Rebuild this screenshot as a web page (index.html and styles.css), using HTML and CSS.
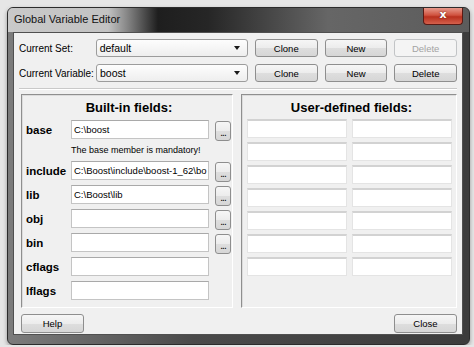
FILE: index.html
```html
<!DOCTYPE html>
<html lang="en">
<head>
    <meta charset="UTF-8"/>
    <title>Global Variable Editor</title>
    <link rel="stylesheet" href="styles.css">
</head>
<body>
<div class="window">
    <div class="titlebar">
        <span class="title">Global Variable Editor</span>
        <span class="close-box">x</span>
    </div>

    <div class="client">
        <!-- set / variable selectors -->
        <div class="select-row">
            <span class="row-label">Current Set:</span>
            <div class="combo"><span>default</span><span class="arrow"></span></div>
            <button class="btn">Clone</button>
            <button class="btn">New</button>
            <button class="btn" disabled>Delete</button>
        </div>
        <div class="select-row">
            <span class="row-label">Current Variable:</span>
            <div class="combo"><span>boost</span><span class="arrow"></span></div>
            <button class="btn">Clone</button>
            <button class="btn">New</button>
            <button class="btn">Delete</button>
        </div>

        <div class="separator"></div>

        <div class="panels">
            <div class="panel builtin">
                <h2 class="panel-title">Built-in fields:</h2>
                <div class="field-row">
                    <span class="field-name">base</span>
                    <div class="input">C:\boost</div>
                    <button class="dots">...</button>
                </div>
                <div class="note">The base member is mandatory!</div>
                <div class="field-row">
                    <span class="field-name">include</span>
                    <div class="input">C:\Boost\include\boost-1_62\bo</div>
                    <button class="dots">...</button>
                </div>
                <div class="field-row">
                    <span class="field-name">lib</span>
                    <div class="input">C:\Boost\lib</div>
                    <button class="dots">...</button>
                </div>
                <div class="field-row">
                    <span class="field-name">obj</span>
                    <div class="input"></div>
                    <button class="dots">...</button>
                </div>
                <div class="field-row">
                    <span class="field-name">bin</span>
                    <div class="input"></div>
                    <button class="dots">...</button>
                </div>
                <div class="field-row flags">
                    <span class="field-name">cflags</span>
                    <div class="input"></div>
                </div>
                <div class="field-row">
                    <span class="field-name">lflags</span>
                    <div class="input"></div>
                </div>
            </div>

            <div class="panel userdef">
                <h2 class="panel-title">User-defined fields:</h2>
                <div class="user-grid">
                    <div class="cell"></div><div class="cell"></div>
                    <div class="cell"></div><div class="cell"></div>
                    <div class="cell"></div><div class="cell"></div>
                    <div class="cell"></div><div class="cell"></div>
                    <div class="cell"></div><div class="cell"></div>
                    <div class="cell"></div><div class="cell"></div>
                    <div class="cell"></div><div class="cell"></div>
                </div>
            </div>
        </div>

        <div class="footer">
            <button class="btn">Help</button>
            <button class="btn">Close</button>
        </div>
    </div>
</div>
</body>
</html>
```

FILE: styles.css
```css
body {
    margin: 0;
    background: #e6e6e6;
    font-family: "Liberation Sans", Arial, sans-serif;
    font-size: 10px;
    color: #000000;
    overflow: hidden;
}

/* window frame */
.window {
    box-sizing: border-box;
    width: 463px;
    height: 338px;
    margin: 7px 0 0 7px;
    padding: 0 6px 9px 5px;
    border: 1px solid #2c2c2c;
    border-radius: 6px;
    background: linear-gradient(to right, #7c7c7c 0, #4a4a4a 40%, #3c3c3c 100%);
    box-shadow: 0 2px 4px rgba(0, 0, 0, 0.35);
}

.titlebar {
    display: flex;
    align-items: flex-start;
    height: 24px;
    margin: 0 -6px 0 -5px;
    padding: 0 6px 0 6px;
    border-radius: 5px 5px 0 0;
    background: linear-gradient(to right, #c9c9c9 0, #c2c2c2 100px, #8a8a8a 118px, #1e1e1e 150px, #262626 200px, #666666 320px, #5c5c5c 100%);
}

.title {
    margin-top: 5px;
    font-size: 11px;
    color: #111111;
}

.close-box {
    box-sizing: border-box;
    margin-left: auto;
    width: 40px;
    height: 17px;
    border: 1px solid #5a1a14;
    border-top: none;
    border-radius: 0 0 4px 4px;
    background: linear-gradient(#e79a8c 0, #d0523f 45%, #b8301e 55%, #d4604c 100%);
    color: #ffffff;
    font-family: "DejaVu Sans", sans-serif;
    font-weight: bold;
    font-size: 11px;
    line-height: 14px;
    text-align: center;
    text-shadow: 0 0 2px #5a1a14;
}

.client {
    box-sizing: border-box;
    height: 303px;
    padding: 6px 5px 0 5px;
    background: #f0f0f0;
    border: 1px solid #505050;
}

/* selector rows */
.select-row {
    display: flex;
    align-items: center;
    gap: 7px;
    height: 18px;
    margin-bottom: 7px;
}

.row-label {
    width: 70px;
    white-space: nowrap;
}

.combo {
    box-sizing: border-box;
    display: flex;
    align-items: center;
    width: 153px;
    height: 18px;
    padding: 0 7px 0 3px;
    border: 1px solid #9c9c9c;
    border-radius: 3px;
    background: linear-gradient(#fdfdfd, #eeeeee);
    font-size: 10.5px;
}

.arrow {
    margin-left: auto;
    width: 0;
    height: 0;
    border-left: 3.5px solid transparent;
    border-right: 3.5px solid transparent;
    border-top: 4px solid #1a1a1a;
}

.btn {
    box-sizing: border-box;
    width: 63px;
    height: 18px;
    padding: 0;
    border: 1px solid #8e8e8e;
    border-radius: 3px;
    background: linear-gradient(#f6f6f6 0, #ececec 50%, #dedede 51%, #d6d6d6 100%);
    font-family: "Liberation Sans", Arial, sans-serif;
    font-size: 9.5px;
    color: #000000;
}

.btn:disabled {
    border-color: #c2c4c6;
    background: #f4f4f4;
    color: #a3a3a3;
}

.separator {
    height: 0;
    margin-top: -1px;
    border-top: 1px solid #c9c9c9;
    border-bottom: 1px solid #ffffff;
}

/* field panels */
.panels {
    display: flex;
    gap: 8px;
    margin-top: 4px;
    padding-left: 2px;
}

.panel {
    box-sizing: border-box;
    height: 214px;
    border: 1px solid;
    border-color: #8f8f8f #ffffff #ffffff #8f8f8f;
    box-shadow: inset 1px 1px 0 #dcdcdc;
}

.builtin {
    width: 213px;
    padding-left: 4px;
}

.userdef {
    width: 217px;
    padding-left: 5px;
}

.panel-title {
    margin: 0;
    height: 24px;
    line-height: 26px;
    font-size: 13px;
    font-weight: bold;
    text-align: center;
}

.builtin .panel-title {
    height: 25px;
}

.field-row {
    display: flex;
    align-items: flex-start;
    height: 20px;
    margin-bottom: 4px;
}

.field-row.flags {
    margin-top: 4px;
}

.field-name {
    width: 45px;
    line-height: 20px;
    font-size: 11.5px;
    font-weight: bold;
}

.input {
    box-sizing: border-box;
    width: 138px;
    height: 19px;
    padding: 0 0 0 2px;
    overflow: hidden;
    white-space: nowrap;
    border: 1px solid #c4c4c4;
    border-top-color: #a9a9a9;
    background: #ffffff;
    font-size: 9.5px;
    line-height: 17px;
}

.dots {
    box-sizing: border-box;
    width: 16px;
    height: 20px;
    margin: 1px 0 0 6px;
    padding: 4px 0 0;
    border: 1px solid #8e8e8e;
    border-radius: 3px;
    background: linear-gradient(#f6f6f6 0, #ececec 50%, #dedede 51%, #d6d6d6 100%);
    font-family: "Liberation Sans", Arial, sans-serif;
    font-size: 10px;
    letter-spacing: -1px;
    line-height: 10px;
}

.note {
    height: 13px;
    margin: 0 0 4px 45px;
    line-height: 13px;
    font-size: 9px;
}

.user-grid {
    display: grid;
    grid-template-columns: 100px 100px;
    column-gap: 5px;
    row-gap: 4px;
}

.cell {
    box-sizing: border-box;
    height: 19px;
    background: #ffffff;
    border: 1px solid #e4e4e4;
    border-top: 2px solid #d2d2d2;
}

/* bottom buttons */
.footer {
    display: flex;
    justify-content: space-between;
    margin-top: 6px;
    padding-left: 2px;
}

.footer .btn {
    height: 19px;
}
```
